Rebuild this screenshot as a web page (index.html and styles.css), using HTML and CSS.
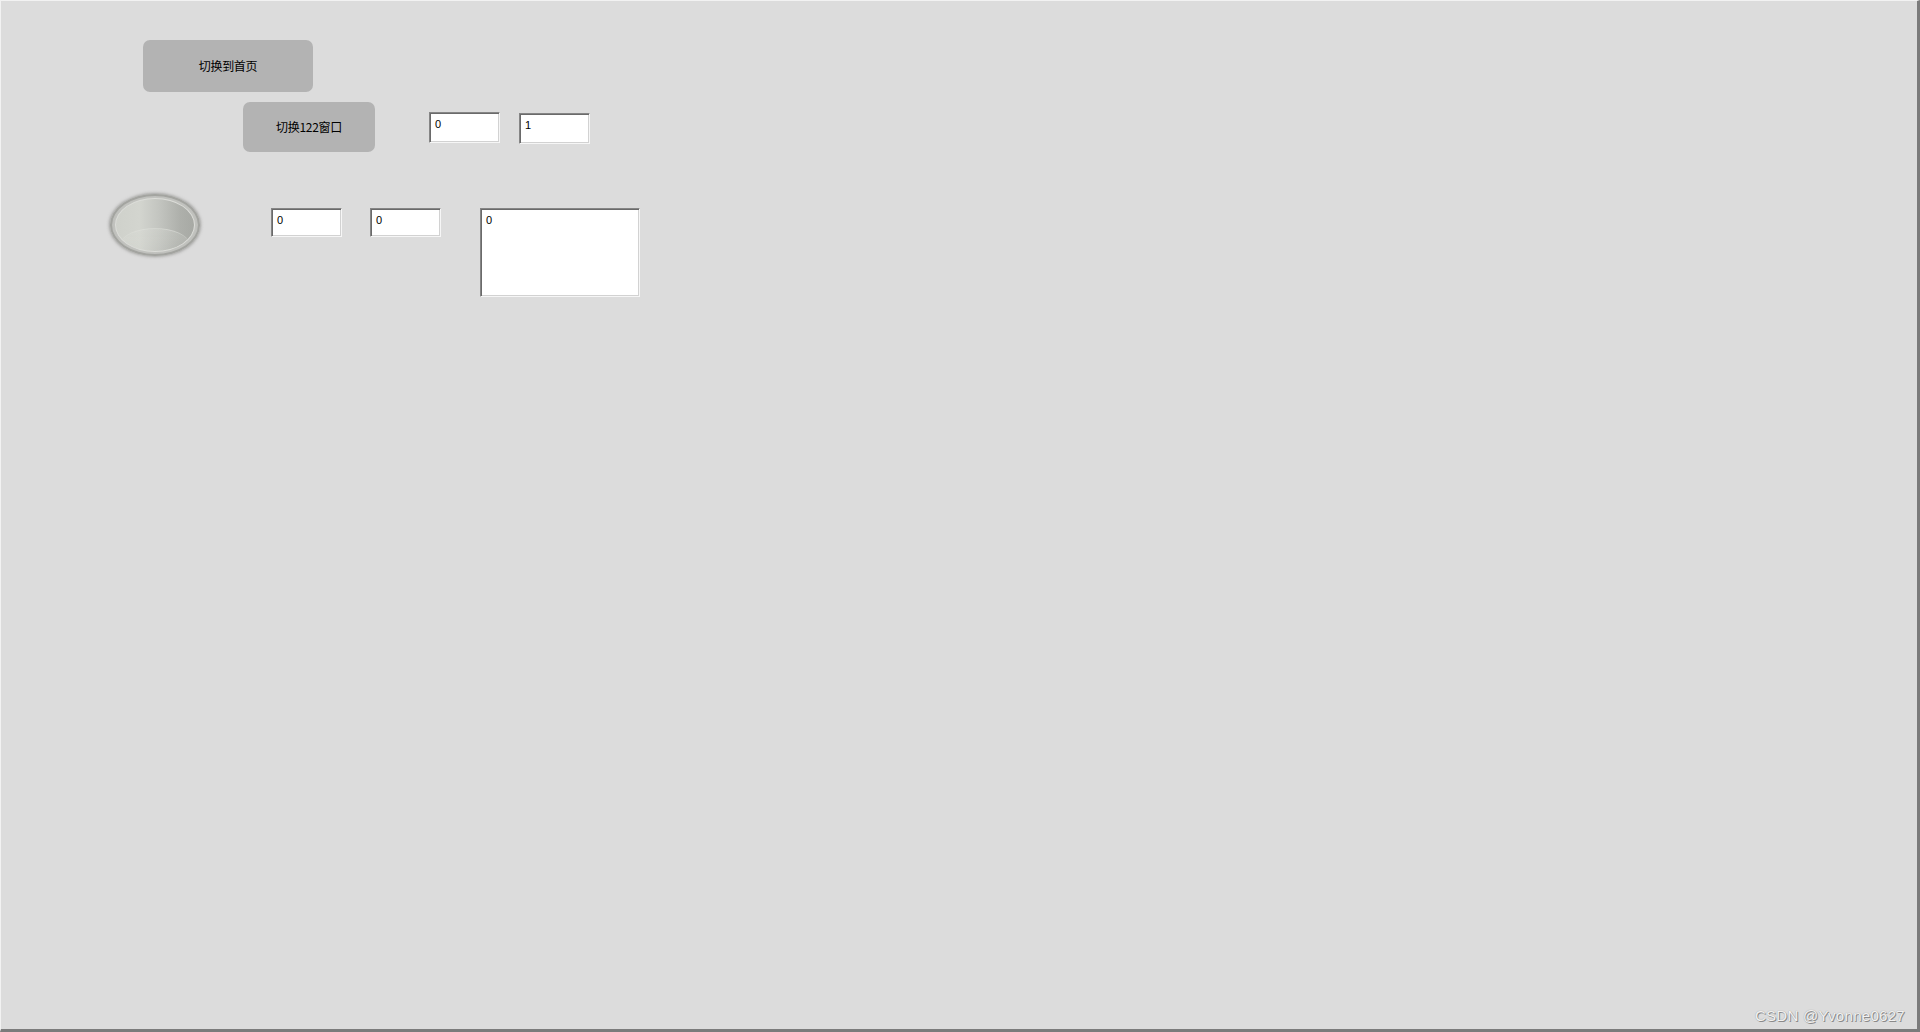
FILE: index.html
```html
<!DOCTYPE html>
<html lang="zh-CN">
<head>
<meta charset="utf-8">
<title>Panel</title>
<link rel="stylesheet" href="styles.css">
</head>
<body>
<div class="panel">
  <div class="row row-1">
    <div class="btn btn-home">切换到首页</div>
  </div>
  <div class="row row-2">
    <div class="btn btn-win">切换122窗口</div>
    <div class="field field-a">0</div>
    <div class="field field-b">1</div>
  </div>
  <div class="row row-3">
    <div class="knob"><div class="knob-face"></div></div>
    <div class="field field-c">0</div>
    <div class="field field-d">0</div>
    <div class="field field-area">0</div>
  </div>
  <div class="watermark">CSDN @Yvonne0627</div>
</div>
</body>
</html>
```

FILE: styles.css
```css
html, body {
  margin: 0;
  padding: 0;
  background: #dcdcdc;
}

.panel {
  position: relative;
  box-sizing: border-box;
  width: 1920px;
  height: 1032px;
  background: #dcdcdc;
  border-top: 1px solid #f2f2f2;
  border-left: 1px solid #f2f2f2;
  border-right: 3px solid #7b7b7b;
  border-bottom: 3px solid #7b7b7b;
  display: flex;
  flex-direction: column;
  overflow: hidden;
}

.row {
  display: flex;
  align-items: flex-start;
}

.row-1 { margin-top: 39px; }
.row-2 { margin-top: 10px; }
.row-3 { margin-top: 42px; }

.btn {
  box-sizing: border-box;
  background: #b3b3b3;
  border-radius: 7px;
  display: flex;
  align-items: center;
  justify-content: center;
  padding-bottom: 2px;
  font-family: "Noto Sans CJK SC", "Liberation Sans", sans-serif;
  font-size: 12px;
  color: #000;
  letter-spacing: -0.3px;
}

.btn-home {
  margin-left: 142px;
  width: 170px;
  height: 52px;
}

.btn-win {
  margin-left: 242px;
  width: 132px;
  height: 50px;
}

.field {
  box-sizing: border-box;
  width: 71px;
  height: 31px;
  background: #ffffff;
  border-style: solid;
  border-width: 1px;
  border-color: #858585 #f6f6f6 #f6f6f6 #858585;
  box-shadow: inset 1px 1px 0 #6a6a6a, inset -1px -1px 0 #d2d2d2;
  padding: 5px 0 0 5px;
  font-family: "Liberation Sans", "DejaVu Sans", sans-serif;
  font-size: 11px;
  line-height: 13px;
  color: #000;
}

.field-a { margin-left: 54px; margin-top: 10px; }
.field-b { margin-left: 19px; margin-top: 11px; }

.field-c { margin-left: 71px; margin-top: 14px; height: 29px; }
.field-d { margin-left: 28px; margin-top: 14px; height: 29px; }
.field-area { margin-left: 39px; margin-top: 14px; width: 160px; height: 89px; }

.knob {
  box-sizing: border-box;
  margin-left: 109px;
  width: 90px;
  height: 62px;
  border-radius: 50%;
  padding: 4px 5px;
  background: radial-gradient(ellipse at center, #c4c5c1 60%, #a2a3a0 100%);
  box-shadow: 0 0 3px 1px rgba(140, 140, 138, 0.75), inset 0 0 0 2px #a3a4a0;
}

.knob-face {
  position: relative;
  height: 100%;
  border-radius: 50%;
  box-sizing: border-box;
  border: 1px solid #dcddd9;
  background: linear-gradient(90deg, #cfd1cb 0%, #d3d5cf 30%, #c3c5c0 55%, #aeb0ab 82%, #a7a9a4 100%);
  overflow: hidden;
}

.knob-face::after {
  content: "";
  position: absolute;
  left: 6%;
  right: 6%;
  top: 55%;
  height: 60%;
  border-radius: 50%;
  border-top: 1px solid rgba(222, 224, 218, 0.55);
  background: linear-gradient(180deg, rgba(226, 228, 222, 0.25), rgba(226, 228, 222, 0));
}

.watermark {
  position: absolute;
  right: 12px;
  bottom: 4px;
  font-family: "Liberation Sans", Arial, sans-serif;
  font-size: 15px;
  line-height: 18px;
  letter-spacing: 0.3px;
  color: #f2f2f2;
  text-shadow: 1px 1px 0 #8a8a8a, 0 0 1px #8a8a8a;
}
```
